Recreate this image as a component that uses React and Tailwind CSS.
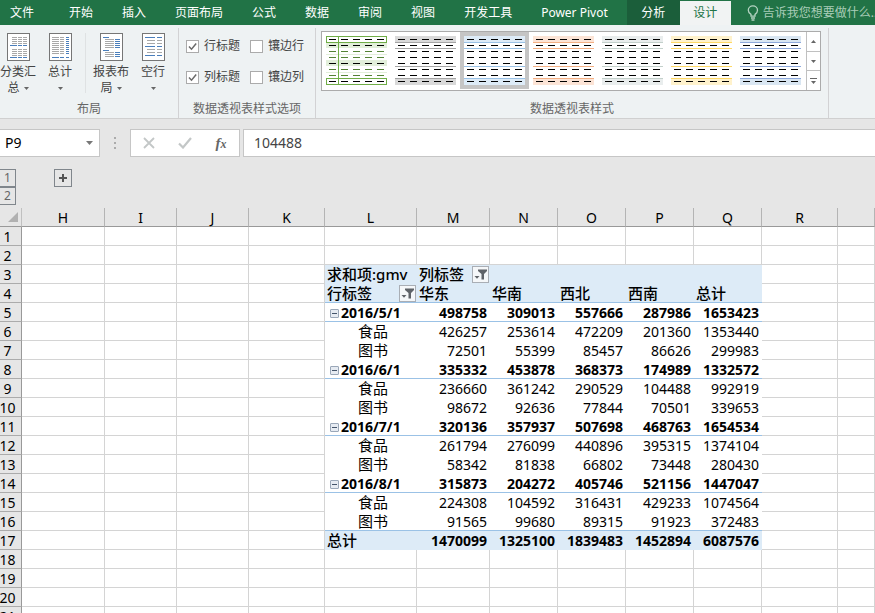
import React from "react";

const FONT = "font-['Noto_Sans','Noto_Sans_CJK_SC',sans-serif]";

/* ---------- ribbon tabs ---------- */

const TABS = ["开始", "插入", "页面布局", "公式", "数据", "审阅", "视图", "开发工具", "Power Pivot"];

function TabBar() {
  return (
    <header className="flex h-[25px] overflow-hidden bg-[#217346] text-xs leading-6 whitespace-nowrap text-white">
      <button type="button" className="pr-[21px] pl-[10px]">文件</button>
      <nav className="flex gap-px">
        {TABS.map((t) => (
          <button key={t} type="button" className="shrink-0 px-[14px]">{t}</button>
        ))}
      </nav>
      <button type="button" className="ml-[5px] w-[53px] shrink-0 bg-[#1b5e3a]">分析</button>
      <button type="button" className="mt-px w-[51px] shrink-0 bg-[#f1f3f3] leading-[22px] text-[#217346]">设计</button>
      <label className="flex min-w-0 flex-1 items-center gap-1 pl-4 text-[#a9cdb8]">
        <svg className="h-4 w-3 shrink-0" viewBox="0 0 12 16" fill="none" stroke="#b5d3c2" strokeWidth="1.3">
          <path d="M4 11.2V9.4C2.5 8.5 1.3 7 1.3 5.2a4.6 4.3 0 0 1 9.2 0C10.5 7 9.300 8.500 8 9.400V11.200Z" />
          <path d="M4 13h4M4.500 15h3" />
        </svg>
        <input
          className="min-w-0 flex-1 bg-transparent outline-none placeholder:text-[#a9cdb8]"
          placeholder="告诉我您想要做什么..."
          aria-label="告诉我您想要做什么"
        />
      </label>
    </header>
  );
}

/* ---------- ribbon icons ---------- */

function Bars({ rows, cols, color }) {
  return rows.flatMap((y) =>
    cols.map(([a, b]) => <rect key={`${y}-${a}`} x={a} y={y} width={b - a} height="1" fill={color} />)
  );
}

const GRAY = "#a8a8a8";
const BLUE = "#4a7ebb";

function Sheet({ children }) {
  return (
    <svg className="h-7 w-[23px]" viewBox="0 0 23 28" shapeRendering="crispEdges">
      <rect x="0.5" y="0.5" width="22" height="27" fill="#fff" stroke="#767676" />
      {children}
    </svg>
  );
}

const SubtotalIcon = () => (
  <Sheet>
    <Bars rows={[4, 6, 8, 10, 16, 18, 20, 22]} cols={[[5, 10], [11, 15], [16, 20]]} color={GRAY} />
    <Bars rows={[12, 24]} cols={[[3, 10], [11, 15], [16, 20]]} color={BLUE} />
  </Sheet>
);

const GrandTotalIcon = () => (
  <Sheet>
    <Bars rows={[4, 6, 8, 10, 12, 14, 16, 18, 20]} cols={[[3, 10], [11, 15]]} color={GRAY} />
    <Bars rows={[4, 6, 8, 10, 12, 14, 16, 18, 20]} cols={[[17, 20]]} color={BLUE} />
    <Bars rows={[24]} cols={[[3, 10], [11, 15], [17, 20]]} color={BLUE} />
  </Sheet>
);

const ReportLayoutIcon = () => (
  <Sheet>
    <Bars rows={[4, 17]} cols={[[3, 9]]} color={BLUE} />
    <Bars rows={[6, 8, 10, 12, 14, 19, 21, 23]} cols={[[5, 14]]} color={GRAY} />
    <Bars rows={[6, 8, 10, 12, 14, 19, 21, 23]} cols={[[15, 20]]} color={BLUE} />
  </Sheet>
);

const BlankRowIcon = () => (
  <Sheet>
    <Bars rows={[4, 13, 22]} cols={[[3, 13], [15, 20]]} color={BLUE} />
    <Bars rows={[7, 10, 16, 19]} cols={[[5, 13], [15, 20]]} color={GRAY} />
  </Sheet>
);

function Caret({ className = "" }) {
  return (
    <svg className={`h-[3px] w-[5px] shrink-0 ${className}`} viewBox="0 0 5 3">
      <path d="M0 0h5L2.500 3Z" fill="#666" />
    </svg>
  );
}

function RibbonButton({ icon, first, second, className }) {
  return (
    <button type="button" className={`flex flex-col items-center ${className}`}>
      {icon}
      <span className="mt-[3px] leading-4 whitespace-nowrap">{first}</span>
      <span className="flex h-4 items-center gap-1 leading-4">
        {second}
        <Caret />
      </span>
    </button>
  );
}

function Group({ title, className, children }) {
  return (
    <section className="flex shrink-0 flex-col border-r border-[#d2d2d4]">
      <div className={`h-[73px] ${className}`}>{children}</div>
      <h2 className="text-center leading-4 text-[#666]">{title}</h2>
    </section>
  );
}

function Check({ label, checked }) {
  return (
    <label className="flex h-4 items-center gap-[5px] whitespace-nowrap">
      <span className="grid size-[13px]">
        <input
          type="checkbox"
          defaultChecked={checked}
          className="peer col-start-1 row-start-1 size-[13px] appearance-none border border-[#ababab] bg-white"
        />
        <svg
          className="pointer-events-none invisible col-start-1 row-start-1 size-[13px] peer-checked:visible"
          viewBox="0 0 13 13"
          fill="none"
          stroke="#6a6a6a"
          strokeWidth="1.5"
        >
          <path d="M3 6.500 5.500 9.200 10.200 3.500" />
        </svg>
      </span>
      {label}
    </label>
  );
}

/* ---------- style gallery ---------- */

const STYLES = [
  { name: "绿色", banded: true },
  { name: "灰色", fill: "#d9d9d9", line: "#a5a5a5" },
  { name: "浅蓝", fill: "#ddebf7", line: "#9bc2e6", selected: true },
  { name: "橙色", fill: "#fce4d6", line: "#f4b084" },
  { name: "浅灰", fill: "#e9eded", line: "#c3d0cb" },
  { name: "黄色", fill: "#fff2cc", line: "#ffd966" },
  { name: "蓝色", fill: "#d9e6f2", line: "#8ea9db" },
];
const DASH_X = [3, 15, 27, 39, 51];

function Thumb({ banded, fill, line }) {
  return (
    <svg className="h-[49px] w-[61px]" viewBox="0 0 61 49" shapeRendering="crispEdges">
      {banded ? (
        <>
          <rect y="7" width="61" height="5" fill="#e2efda" />
          <rect y="24" width="61" height="6" fill="#e2efda" />
          <rect y="18" width="61" height="1" fill="#e2efda" />
          <rect y="36" width="61" height="1" fill="#e2efda" />
          <rect x="12" y="0" width="1" height="48" fill="#70ad47" />
          <rect x="0.5" y="0.5" width="60" height="6" fill="none" stroke="#70ad47" />
          <rect x="0.5" y="42.5" width="60" height="6" fill="none" stroke="#70ad47" />
        </>
      ) : (
        <>
          <rect width="61" height="6" fill={fill} />
          <rect y="43" width="61" height="6" fill={fill} />
          {[6, 12, 30, 42].map((y) => (
            <rect key={y} y={y} width="61" height="1" fill={line} />
          ))}
        </>
      )}
      {[0, 1, 2, 3, 4, 5, 6, 7].map((r) =>
        DASH_X.map((x) => (
          <rect
            key={`${r}-${x}`}
            x={x}
            y={3 + r * 6}
            width="7"
            height="1"
            fill={banded && [2, 3, 5, 6].includes(r) ? "#548235" : "#000"}
          />
        ))
      )}
    </svg>
  );
}

function Gallery() {
  return (
    <div className="flex h-[60px] border border-[#ababab] bg-white">
      {STYLES.map((s) => (
        <button
          key={s.name}
          type="button"
          aria-label={s.name}
          className={`flex h-[57px] w-[69px] items-center justify-center ${s.selected ? "bg-[#c5c5c5]" : ""}`}
        >
          <span className="bg-white"><Thumb {...s} /></span>
        </button>
      ))}
      <div className="ml-px flex w-[14px] flex-col divide-y divide-[#c0c0c0] border-l border-[#c0c0c0]">
        <button type="button" aria-label="上一行" className="flex flex-1 items-center justify-center">
          <Caret className="rotate-180" />
        </button>
        <button type="button" aria-label="下一行" className="flex flex-1 items-center justify-center">
          <Caret />
        </button>
        <button type="button" aria-label="其他" className="flex flex-1 flex-col items-center justify-center gap-[2px]">
          <span className="h-px w-[7px] bg-[#666]" />
          <Caret />
        </button>
      </div>
    </div>
  );
}

function Ribbon() {
  return (
    <div className="flex h-[94px] overflow-hidden border-b border-[#d0d0d0] bg-[#eef2f3] pt-[3px] text-xs text-[#444]">
      <Group title="布局" className="flex pt-[5px] pr-[7px]">
        <RibbonButton icon={<SubtotalIcon />} first="分类汇" second="总" className="w-9" />
        <RibbonButton icon={<GrandTotalIcon />} first="总计" className="ml-3 w-6" />
        <div className="mr-[7px] ml-[13px] h-[60px] w-px bg-[#dfe2e3]" />
        <RibbonButton icon={<ReportLayoutIcon />} first="报表布" second="局" className="w-9" />
        <RibbonButton icon={<BlankRowIcon />} first="空行" className="ml-3 mr-[6px] w-6" />
      </Group>
      <Group title="数据透视表样式选项" className="grid grid-cols-[64px_auto] content-start gap-y-[15px] pt-[10px] pr-[11px] pl-[7px]">
        <Check label="行标题" checked />
        <Check label="镶边行" />
        <Check label="列标题" checked />
        <Check label="镶边列" />
      </Group>
      <Group title="数据透视表样式" className="pt-[3px] pr-[7px] pl-[5px]">
        <Gallery />
      </Group>
    </div>
  );
}

/* ---------- formula bar and outline strip ---------- */

function FormulaBar() {
  return (
    <div className="flex h-[38px] pt-[10px] text-sm leading-[26px]">
      <div className="flex w-[100px] items-center border border-l-0 border-[#c6c6c6] bg-white">
        <input aria-label="名称框" defaultValue="P9" className="w-0 flex-1 pl-[5px] text-black outline-none" />
        <button type="button" aria-label="展开名称框" className="flex h-full w-5 items-center justify-center">
          <svg className="h-1 w-[7px]" viewBox="0 0 7 4"><path d="M0 0h7L3.500 4Z" fill="#777" /></svg>
        </button>
      </div>
      <div className="flex w-[30px] flex-col items-center justify-center gap-[3px]">
        <i className="size-[2px] bg-[#ababab]" />
        <i className="size-[2px] bg-[#ababab]" />
        <i className="size-[2px] bg-[#ababab]" />
      </div>
      <div className="flex w-[110px] border border-[#c6c6c6] bg-white">
        <button type="button" aria-label="取消" className="flex flex-1 items-center justify-center">
          <svg className="size-3" viewBox="0 0 12 12" fill="none" stroke="#c3c7c7" strokeWidth="1.800"><path d="M1 1l10 10M11 1 1 11" /></svg>
        </button>
        <button type="button" aria-label="输入" className="flex flex-1 items-center justify-center">
          <svg className="h-3 w-[14px]" viewBox="0 0 14 12" fill="none" stroke="#c3c7c7" strokeWidth="2.200"><path d="M1 6.500 5 10.500 13 1" /></svg>
        </button>
        <button type="button" aria-label="插入函数" className="flex-1 font-['Liberation_Serif',serif] text-[15px] font-bold text-[#666] italic">
          f<span className="text-xs">x</span>
        </button>
      </div>
      <input
        aria-label="编辑栏"
        defaultValue="104488"
        className="ml-[3px] min-w-0 flex-1 border border-r-0 border-[#c6c6c6] bg-white pl-[10px] text-[#444] outline-none"
      />
    </div>
  );
}

function OutlineStrip() {
  return (
    <div className="flex h-[51px] items-start gap-[38px] pt-3 text-xs text-[#666]">
      <div className="flex flex-col">
        <button type="button" className="h-[18px] w-4 border border-l-0 border-[#80868c] leading-4">1</button>
        <button type="button" className="h-[18px] w-4 border border-l-0 border-[#80868c] leading-4">2</button>
      </div>
      <button type="button" aria-label="展开" className="flex size-[18px] items-center justify-center border border-[#80868c]">
        <svg className="size-2" viewBox="0 0 8 8" shapeRendering="crispEdges"><path d="M3 0h2v3h3v2H5v3H3V5H0V3h3Z" fill="#555" /></svg>
      </button>
    </div>
  );
}

/* ---------- worksheet ---------- */

const COLUMNS = ["H", "I", "J", "K", "L", "M", "N", "O", "P", "Q", "R", ""];
const PIVOT_COLS = ["L", "M", "N", "O", "P", "Q"];

const PIVOT = {
  3: { kind: "head", cells: ["求和项:gmv", "列标签", "", "", "", ""], filter: 1 },
  4: { kind: "head", line: true, cells: ["行标签", "华东", "华南", "西北", "西南", "总计"], filter: 0 },
  5: { kind: "date", cells: ["2016/5/1", 498758, 309013, 557666, 287986, 1653423] },
  6: { kind: "item", cells: ["食品", 426257, 253614, 472209, 201360, 1353440] },
  7: { kind: "item", cells: ["图书", 72501, 55399, 85457, 86626, 299983] },
  8: { kind: "date", cells: ["2016/6/1", 335332, 453878, 368373, 174989, 1332572] },
  9: { kind: "item", cells: ["食品", 236660, 361242, 290529, 104488, 992919] },
  10: { kind: "item", cells: ["图书", 98672, 92636, 77844, 70501, 339653] },
  11: { kind: "date", cells: ["2016/7/1", 320136, 357937, 507698, 468763, 1654534] },
  12: { kind: "item", cells: ["食品", 261794, 276099, 440896, 395315, 1374104] },
  13: { kind: "item", cells: ["图书", 58342, 81838, 66802, 73448, 280430] },
  14: { kind: "date", cells: ["2016/8/1", 315873, 204272, 405746, 521156, 1447047] },
  15: { kind: "item", cells: ["食品", 224308, 104592, 316431, 429233, 1074564] },
  16: { kind: "item", line: true, cells: ["图书", 91565, 99680, 89315, 91923, 372483] },
  17: { kind: "total", cells: ["总计", 1470099, 1325100, 1839483, 1452894, 6087576] },
};

function FilterButton() {
  return (
    <button type="button" aria-label="筛选" className="size-[17px] shrink-0 border border-[#a9aeb5] bg-[#f5f7f9]">
      <svg className="size-[15px]" viewBox="0 0 15 15">
        <path d="M5 2.500h9v1.500L11 7v5.500H8.500V7L5 4Z" fill="#5f6368" />
        <path d="M1.500 9h5L4 11.800Z" fill="#5f6368" />
      </svg>
    </button>
  );
}

function Collapse() {
  return (
    <button type="button" aria-label="折叠" className="flex size-[9px] items-center justify-center rounded-[1px] border border-[#9aa7b8] bg-[#e6ebf2]">
      <span className="h-px w-[5px] bg-[#44546a]" />
    </button>
  );
}

function PivotCell({ row, index }) {
  const value = row.cells[index];
  const filled = row.kind === "head" || row.kind === "total";
  const ruled = row.line || row.kind === "date";
  const border = ruled ? "border-b border-[#9bc2e6]" : "border-b border-transparent";
  const fill = filled ? "bg-[#ddebf7]" : "bg-white";
  const weight = row.kind === "item" ? "" : "font-bold";

  if (typeof value === "number") {
    return <td className={`p-0 pt-[2px] pr-[3px] text-right leading-4 ${border} ${fill} ${weight}`}>{value}</td>;
  }
  if (row.kind === "date") {
    return (
      <td className={`p-0 pt-[2px] pl-[5px] font-bold leading-4 ${border} ${fill}`}>
        <div className="flex h-4 items-center gap-[2px]"><Collapse />{value}</div>
      </td>
    );
  }
  if (row.kind === "item") {
    return <td className={`p-0 pl-[33px] text-[15px] ${border} ${fill}`}>{value}</td>;
  }
  return (
    <td className={`p-0 pl-[2px] text-[15px] font-medium ${border} ${fill}`}>
      <div className={`flex h-[18px] items-center justify-between whitespace-nowrap pr-px`}>
        {value}
        {row.filter === index && <FilterButton />}
      </div>
    </td>
  );
}

function Worksheet() {
  return (
    <div className="min-h-0 flex-1 overflow-hidden">
      <table className="w-full table-fixed border-separate border-spacing-0 text-sm leading-[18px] text-black">
        <colgroup>
          <col className="w-[22px]" />
          <col className="w-[83px]" />
          <col className="w-[72px]" />
          <col className="w-[72px]" />
          <col className="w-[76px]" />
          <col className="w-[92px]" />
          <col className="w-[73px]" />
          <col className="w-[68px]" />
          <col className="w-[68px]" />
          <col className="w-[68px]" />
          <col className="w-[68px]" />
          <col className="w-[76px]" />
          <col />
        </colgroup>
        <thead>
          <tr className="h-[19px]">
            <td className="border-r border-b border-r-[#c0c0c0] border-b-[#999] p-0">
              <svg className="ml-2 size-[10px]" viewBox="0 0 10 10"><path d="M10 0v10H0Z" fill="#b1b1b1" /></svg>
            </td>
            {COLUMNS.map((c) => (
              <th key={c} scope="col" className="border-r border-b border-r-[#b4b4b4] border-b-[#999] p-0 pt-[2px] text-center leading-4 font-normal">
                {c}
              </th>
            ))}
          </tr>
        </thead>
        <tbody className="bg-white">
          {Array.from({ length: 21 }, (_, i) => i + 1).map((n) => {
            const row = PIVOT[n];
            return (
              <tr key={n} className="h-[19px]">
                <th scope="row" className="border-r border-b border-r-[#999] border-b-[#ababab] bg-[#e6e6e6] p-0 pt-[2px] pr-[6px] leading-4 font-normal">
                  <div className="flex justify-center">{n}</div>
                </th>
                {COLUMNS.map((c) => {
                  const index = PIVOT_COLS.indexOf(c);
                  if (row && index >= 0) return <PivotCell key={c} row={row} index={index} />;
                  return <td key={c} className="border-r border-b border-[#d4d4d4] p-0" />;
                })}
              </tr>
            );
          })}
        </tbody>
      </table>
    </div>
  );
}

export default function App() {
  return (
    <div className={`flex h-screen flex-col overflow-hidden bg-[#e6e6e6] ${FONT}`}>
      <TabBar />
      <Ribbon />
      <FormulaBar />
      <OutlineStrip />
      <Worksheet />
    </div>
  );
}
